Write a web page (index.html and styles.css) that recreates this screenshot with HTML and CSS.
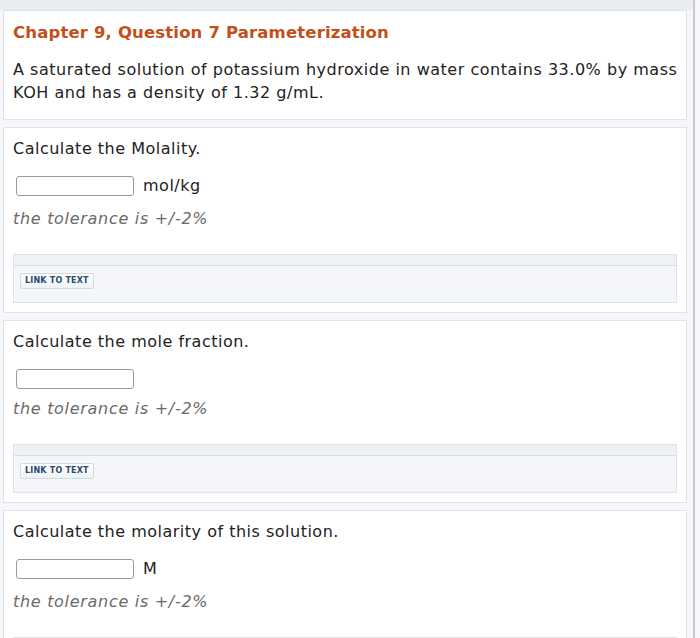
FILE: index.html
```html
<!DOCTYPE html>
<html lang="en">
<head>
  <meta charset="UTF-8">
  <title>Chapter 9, Question 7 Parameterization</title>
  <link rel="stylesheet" href="styles.css">
</head>
<body>
  <div class="frame">
    <div class="topbar"></div>
    <div class="content">
      <!-- Question intro -->
      <div class="card intro">
        <h1>Chapter 9, Question 7 Parameterization</h1>
        <p>A saturated solution of potassium hydroxide in water contains 33.0% by mass KOH and has a density of 1.32 g/mL.</p>
      </div>

      <!-- Part 1 -->
      <div class="card part">
        <p class="question">Calculate the Molality.</p>
        <div class="answer">
          <input type="text" class="answer-box">
          <span class="unit">mol/kg</span>
        </div>
        <p class="tolerance">the tolerance is +/-2%</p>
        <div class="resources">
          <div class="resources-bar"></div>
          <div class="resources-body">
            <a href="#" class="link-button">LINK TO TEXT</a>
          </div>
        </div>
      </div>

      <!-- Part 2 -->
      <div class="card part">
        <p class="question">Calculate the mole fraction.</p>
        <div class="answer">
          <input type="text" class="answer-box">
        </div>
        <p class="tolerance">the tolerance is +/-2%</p>
        <div class="resources">
          <div class="resources-bar"></div>
          <div class="resources-body">
            <a href="#" class="link-button">LINK TO TEXT</a>
          </div>
        </div>
      </div>

      <!-- Part 3 -->
      <div class="card part">
        <p class="question">Calculate the molarity of this solution.</p>
        <div class="answer">
          <input type="text" class="answer-box">
          <span class="unit">M</span>
        </div>
        <p class="tolerance">the tolerance is +/-2%</p>
        <div class="resources">
          <div class="resources-bar"></div>
          <div class="resources-body">
            <a href="#" class="link-button">LINK TO TEXT</a>
          </div>
        </div>
      </div>
    </div>
  </div>
</body>
</html>
```

FILE: styles.css
```css
/* General */
body {
  margin: 0;
  font-family: "DejaVu Sans", Verdana, sans-serif;
  background-color: #f5f7fa;
  color: #222;
  overflow: hidden;
}

.frame {
  width: 693px;
  border-right: 2px solid #cbcbcb;
  min-height: 100vh;
}

.topbar {
  height: 10px;
  background-color: #e9edf1;
}

.content {
  padding: 0 6px 0 3px;
  display: flex;
  flex-direction: column;
  gap: 7px;
}

/* Cards */
.card {
  background-color: #fff;
  border: 1px solid #dfe4ea;
  padding: 10px 9px 9px;
}

.intro {
  padding-top: 11px;
  padding-right: 3px;
  padding-bottom: 15px;
}

.intro h1 {
  margin: 0 0 14px;
  font-size: 16.5px;
  line-height: 22px;
  letter-spacing: 0.15px;
  color: #c2501a;
}

.intro p {
  margin: 0;
  font-size: 16px;
  line-height: 23px;
  letter-spacing: 0.52px;
}

.question {
  margin: 0;
  font-size: 16px;
  line-height: 22px;
  letter-spacing: 0.5px;
}

.answer {
  margin-top: 13px;
  display: flex;
  align-items: flex-start;
  gap: 9px;
}

.answer-box {
  margin: 3px 0 0 3px;
  width: 118px;
  height: 20px;
  box-sizing: border-box;
  border: 1px solid #9a9a9a;
  border-radius: 3px;
  background: #fff;
}

.unit {
  font-size: 16px;
  line-height: 26px;
  letter-spacing: 0.5px;
}

.tolerance {
  margin: 9px 0 0;
  font-size: 16px;
  line-height: 22px;
  letter-spacing: 0.7px;
  font-style: italic;
  color: #6a6a6a;
}

/* Resource panel */
.resources {
  margin-top: 24px;
  border: 1px solid #dde2e9;
}

.resources-bar {
  height: 10px;
  background-color: #eef2f6;
  border-bottom: 1px solid #d9dfe7;
}

.resources-body {
  display: flex;
  align-items: flex-start;
  background-color: #f4f6f9;
  padding: 7px 6px 13px;
}

.link-button {
  display: block;
  font-size: 8px;
  font-weight: bold;
  letter-spacing: 0.2px;
  line-height: 14px;
  padding: 0 4px;
  color: #2b4870;
  text-decoration: none;
  background: linear-gradient(#ffffff, #eef1f5);
  border: 1px solid #d3d9e1;
  border-radius: 2px;
}
```
